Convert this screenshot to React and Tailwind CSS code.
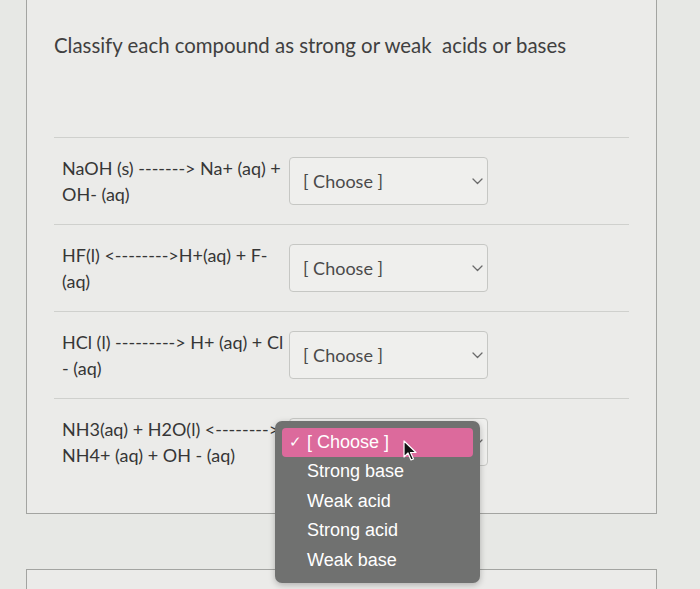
import React from "react";

const rows = [
  ["NaOH (s) -------> Na+ (aq) +", "OH- (aq)"],
  ["HF(l) <-------->H+(aq) + F-", "(aq)"],
  ["HCl (l) ---------> H+ (aq) + Cl", "- (aq)"],
  ["NH3(aq) + H2O(l) <-------->", "NH4+ (aq) + OH - (aq)"],
];

function Chevron() {
  return (
    <svg width="11" height="7" viewBox="0 0 11 7" className="shrink-0">
      <path d="M1 1l4.5 4.5L10 1" fill="none" stroke="#6a6a6a" strokeWidth="1.3" strokeLinecap="round" strokeLinejoin="round" />
    </svg>
  );
}

function Select() {
  return (
    <div className="w-[199px] h-[48px] shrink-0 rounded-[4px] border border-[#c6c7c4] bg-[#efefed] flex items-center justify-between pl-[13px] pr-[4px]">
      <span className="text-[18px] text-[#4a4a4a]" style={{ fontFamily: "Lato, sans-serif" }}>[ Choose ]</span>
      <Chevron />
    </div>
  );
}

export default function App() {
  return (
    <div className="relative w-[700px] h-[589px] overflow-hidden bg-[#e7e8e5]" style={{ fontFamily: "Lato, sans-serif" }}>
      <div className="ml-[26px] w-[631px] h-[514px] border-x border-b border-[#a3a4a1] bg-[#ebebe9] px-[27px] pt-[31px] flex flex-col">
        <h1 className="text-[20.4px] leading-[28px] text-[#404040] font-normal whitespace-nowrap">
          Classify each compound as strong or weak&nbsp; acids or bases
        </h1>
        <div className="mt-[78px] flex flex-col">
          {rows.map((r, i) => (
            <div key={i} className="h-[87px] border-t border-[#cfd0cd] flex items-center gap-[7px] pl-[8px]">
              <div className="w-[220px] text-[18px] leading-[26px] text-[#363636]">
                <div className="whitespace-nowrap">{r[0]}</div>
                <div className="whitespace-nowrap">{r[1]}</div>
              </div>
              <Select />
            </div>
          ))}
        </div>
      </div>
      <div className="ml-[26px] mt-[55px] w-[631px] h-[40px] border-x border-t border-[#a3a4a1] bg-[#ebebe9]" />

      {/* open dropdown menu */}
      <div
        className="absolute left-[275px] top-[421px] w-[205px] h-[162px] rounded-[7px] bg-[#707170] pt-[7px] shadow-[0_2px_6px_rgba(0,0,0,0.25)]"
        style={{ fontFamily: '"Liberation Sans", Arial, sans-serif' }}
      >
        <div className="mx-[7px] h-[29px] rounded-[4px] bg-[#dc6a9c] flex items-center pl-[7px] text-white text-[18px]">
          <span className="w-[18px] text-[15px]">✓</span>
          <span>[ Choose ]</span>
        </div>
        {["Strong base", "Weak acid", "Strong acid", "Weak base"].map((t) => (
          <div key={t} className="h-[29.5px] flex items-center pl-[32px] text-white text-[18px]">
            {t}
          </div>
        ))}
      </div>

      {/* cursor */}
      <svg className="absolute left-[403px] top-[440px]" width="14" height="22" viewBox="0 0 14 22">
        <path d="M1 1 L1 17 L5 13 L8 20 L10.5 19 L7.5 12.5 L13 12.5 Z" fill="#111" stroke="#fff" strokeWidth="1.2" strokeLinejoin="round" />
      </svg>
    </div>
  );
}
